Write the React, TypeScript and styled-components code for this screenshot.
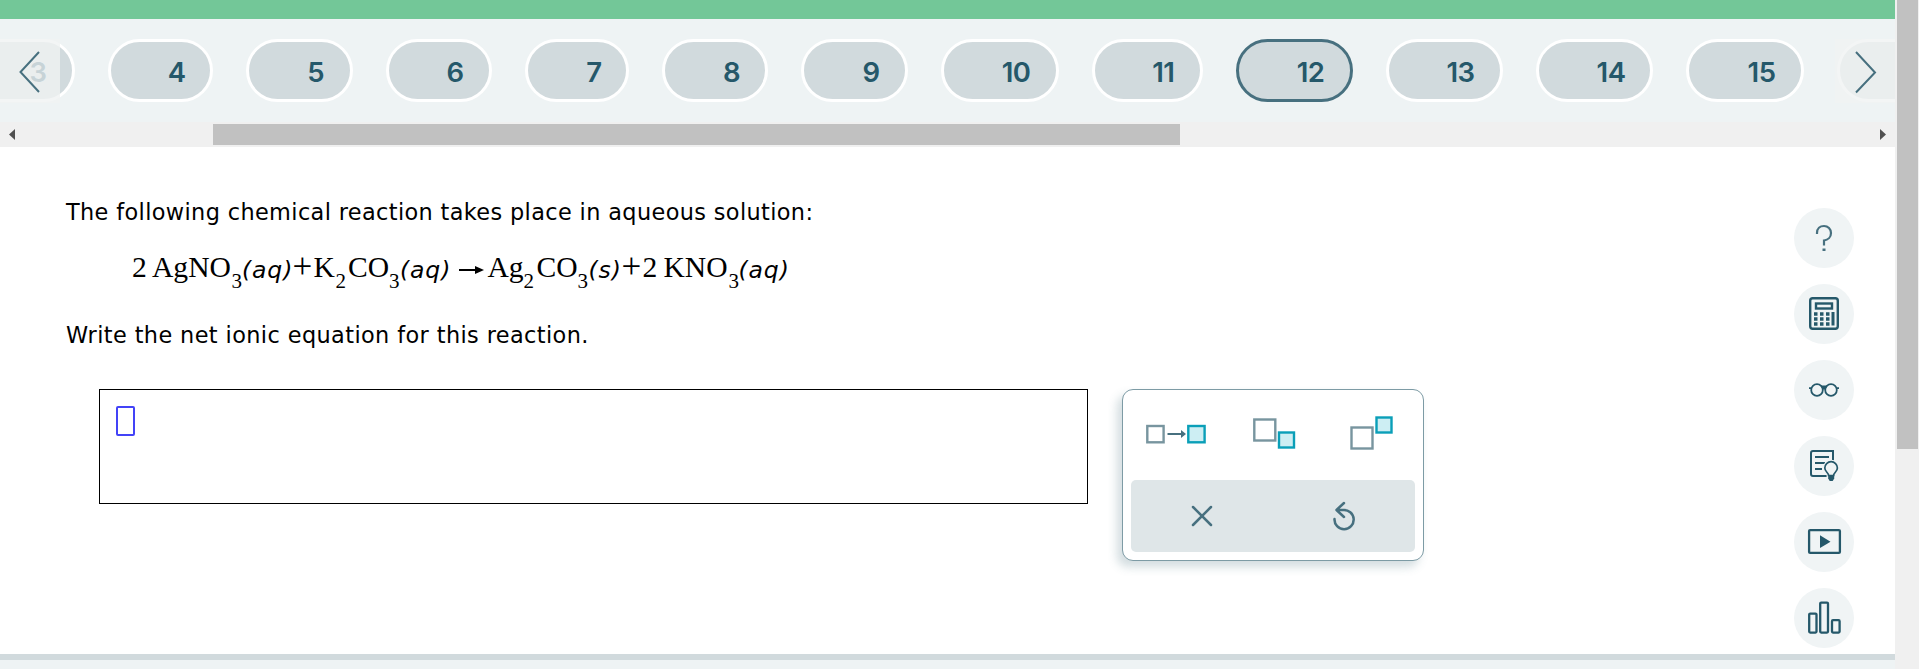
import React from 'react';
import styled, { createGlobalStyle } from 'styled-components';

const GlobalStyle = createGlobalStyle`
  * { box-sizing: border-box; }
  body { margin: 0; background: #fff; overflow: hidden; }
`;

const Screen = styled.div`
  display: flex;
  width: 1919px;
  height: 669px;
  overflow: hidden;
  background: #fff;
`;

const Page = styled.div`
  width: 1895px;
  display: flex;
  flex-direction: column;
`;

const TopBar = styled.div`
  height: 19px;
  flex: none;
  background: #73c798;
`;

const QuestionNav = styled.nav`
  position: relative;
  height: 103px;
  flex: none;
  display: flex;
  align-items: flex-start;
  padding-top: 20px;
  overflow: hidden;
  background: #eef3f4;
`;

const Pill = styled.div<{ $width: number; $inset?: number; $active?: boolean }>`
  flex: none;
  width: ${(p) => p.$width}px;
  height: 63px;
  padding: 4px ${(p) => p.$inset ?? 25.5}px 0 0;
  border: 3px solid ${(p) => (p.$active ? '#47707f' : '#fff')};
  border-radius: 32px;
  background: #d1dadd;
  display: flex;
  align-items: center;
  justify-content: flex-end;
  font: 600 27.5px/1 Inter, sans-serif;
  letter-spacing: -0.5px;
  color: #25586a;
`;

const PillStrip = styled.div`
  display: flex;
  gap: 33px;
  margin-left: -31px;
`;

const NavArrow = styled.button<{ $side: 'left' | 'right' }>`
  position: absolute;
  top: 20px;
  ${(p) => p.$side}: 0;
  width: 60px;
  height: 64px;
  padding: 0;
  border: 0;
  background: rgba(240, 243, 243, 0.8);
`;

const HScroll = styled.div`
  height: 25px;
  flex: none;
  display: flex;
  align-items: center;
  justify-content: space-between;
  background: #f0f0f0;
`;

const HTrack = styled.div`
  flex: 1;
  padding-left: 189px;
`;

const HThumb = styled.div`
  width: 967px;
  height: 21px;
  background: #c1c1c1;
`;

const Body = styled.main`
  height: 507px;
  flex: none;
  display: flex;
  justify-content: space-between;
`;

const Question = styled.section`
  padding: 49px 0 0 66px;
  color: #000;
`;

const Paragraph = styled.p<{ $spacing: number }>`
  margin: 0;
  height: 32px;
  font: 22.4px/32px 'DejaVu Sans', Verdana, sans-serif;
  letter-spacing: ${(p) => p.$spacing}px;
  white-space: nowrap;
`;

const Equation = styled.div`
  display: flex;
  align-items: baseline;
  height: 60px;
  margin: 9px 0 22px 66px;
  font: 29.6px/60px 'Liberation Serif', serif;
  white-space: pre;
`;

const Term = styled.span<{ $width: number }>`
  width: ${(p) => p.$width}px;
  flex: none;
`;

const Plus = styled(Term)`
  position: relative;
  top: 1px;
  left: -1px;
  font-size: 35px;
  line-height: 1;
`;

const Sub = styled(Term)`
  position: relative;
  top: 11px;
  font-size: 21px;
  line-height: 1;
`;

const State = styled(Term)`
  position: relative;
  top: 1px;
  font: italic 23.5px/1 'DejaVu Sans', Verdana, sans-serif;
  letter-spacing: 0.9px;
`;

const Workspace = styled.div`
  display: flex;
  align-items: flex-start;
  gap: 34px;
  margin: 38px 0 0 33px;
`;

const Answer = styled.div`
  width: 989px;
  height: 115px;
  padding: 16px;
  border: 1px solid #000;
`;

const Slot = styled.div`
  width: 19px;
  height: 30px;
  border: 2px solid #4343f7;
  border-radius: 2px;
`;

const Palette = styled.div`
  width: 302px;
  height: 172px;
  padding: 8px;
  display: flex;
  flex-direction: column;
  justify-content: space-between;
  border: 1px solid #7d9ba5;
  border-radius: 11px;
  background: #fff;
  box-shadow: -5px 6px 10px rgba(71, 112, 127, 0.24);
`;

const PaletteActions = styled.div`
  height: 72px;
  border-radius: 5px;
  background: #dfe6e8;
`;

const SideTools = styled.aside`
  display: flex;
  flex-direction: column;
  gap: 16px;
  padding: 61px 41px 0 0;
`;

const ToolButton = styled.button`
  width: 60px;
  height: 60px;
  padding: 0;
  border: 0;
  border-radius: 50%;
  background: #f0f4f5;
  display: block;
`;

const Footer = styled.div`
  flex: 1;
  border-top: 6px solid #d1dadd;
  background: #eef3f4;
`;

const VScroll = styled.div`
  width: 24px;
  padding: 0 1px 0 2px;
  background: #f0f0f0;
`;

const VThumb = styled.div`
  height: 449px;
  background: #c1c1c1;
`;

const Svg = styled.svg`
  display: block;
  flex: none;
`;

const pills = [
  { label: '3', w: 106 },
  { label: '4', w: 105, inset: 24.5 },
  { label: '5', w: 107, inset: 26 },
  { label: '6', w: 106 },
  { label: '7', w: 104, inset: 24.5 },
  { label: '8', w: 106, inset: 25 },
  { label: '9', w: 107 },
  { label: '10', w: 118 },
  { label: '11', w: 111 },
  { label: '12', w: 117 },
  { label: '13', w: 117 },
  { label: '14', w: 117, inset: 24.5 },
  { label: '15', w: 118 },
  { label: '', w: 118 },
];

function HelpIcon() {
  return (
    <g fill="none" stroke="#47707f" strokeWidth="2.200">
      <path d="M23 26v-1c0-4.500 3-7 7-7s7 3 7 7-3 7-7 7.500v5" />
      <path d="M30 40.500v2.500" strokeWidth="3" />
    </g>
  );
}

function CalculatorIcon() {
  return (
    <g fill="none" stroke="#25586a" strokeWidth="2.400">
      <rect x="16.200" y="14.200" width="27.600" height="30.600" rx="2.500" />
      <rect x="22" y="19.500" width="16" height="5" />
      {[30, 35, 40].map((y) => (
        <path key={y} d={`M20 ${y}h3.500M26 ${y}h3.500M32 ${y}h3.500`} strokeWidth="3.300" />
      ))}
      <path d="M39 28v13.500" strokeWidth="3" />
    </g>
  );
}

function GlassesIcon() {
  return (
    <g fill="none" stroke="#25586a" strokeWidth="1.800">
      <circle cx="23" cy="30" r="5.800" />
      <circle cx="37" cy="30" r="5.800" />
      <path d="M15 28.200h2.500M45 28.200h-2.500M27 26.500h6M28.500 29q1.500-1.500 3 0" />
    </g>
  );
}

function NotesIcon() {
  const bulb = 'M34.600 39.500c0-3-3.800-3.700-3.800-7.500a6.300 6.300 0 0 1 12.600 0c0 3.800-3.800 4.500-3.800 7.500z';
  return (
    <g fill="none" stroke="#25586a" strokeWidth="2">
      <path d="M34 40H19q-2 0-2-2V17q0-2 2-2h20v12M21 21h14M21 27h10M21 33h7" />
      <path d={bulb} stroke="#f0f4f5" strokeWidth="4" />
      <path d={bulb} fill="#f0f4f5" strokeWidth="1.700" />
      <path d="M34.200 39h6v3.500l-1.500 2.500h-3l-1.500-2.500z" fill="#25586a" stroke="none" />
    </g>
  );
}

function VideoIcon() {
  return (
    <g>
      <rect x="15.100" y="18.100" width="30.800" height="22.800" rx="1" fill="none" stroke="#25586a" strokeWidth="2.300" />
      <path d="M26 23.300v12.700l10.500-6.350z" fill="#25586a" />
    </g>
  );
}

function ChartIcon() {
  return (
    <g fill="none" stroke="#25586a" strokeWidth="2.300">
      <rect x="15.200" y="25.600" width="7.300" height="19" rx="1" />
      <rect x="26.200" y="14.600" width="7.800" height="30" rx="1" />
      <rect x="38" y="32.200" width="7.600" height="12.400" rx="1" />
    </g>
  );
}

const tools = [HelpIcon, CalculatorIcon, GlassesIcon, NotesIcon, VideoIcon, ChartIcon];

export default function App() {
  return (
    <Screen>
      <GlobalStyle />
      <Page>
        <TopBar />
        <QuestionNav>
          <PillStrip>
            {pills.map((p) => (
              <Pill key={p.label} $width={p.w} $inset={p.inset} $active={p.label === '12'}>
                {p.label}
              </Pill>
            ))}
          </PillStrip>
          <NavArrow $side="left" aria-label="Previous">
            <Svg width="60" height="64" fill="none" stroke="#47707f" strokeWidth="2">
              <path d="M39 13L20.500 33L39 53" />
            </Svg>
          </NavArrow>
          <NavArrow $side="right" aria-label="Next">
            <Svg width="60" height="64" fill="none" stroke="#47707f" strokeWidth="2">
              <path d="M21 13L40 33.500L21 53.500" />
            </Svg>
          </NavArrow>
        </QuestionNav>
        <HScroll>
          <Svg width="24" height="21" fill="#505050">
            <path d="M15 5v11l-6-5.500z" />
          </Svg>
          <HTrack>
            <HThumb />
          </HTrack>
          <Svg width="24" height="21" fill="#505050">
            <path d="M9 5v11l6-5.500z" />
          </Svg>
        </HScroll>
        <Body>
          <Question>
            <Paragraph $spacing={0.37}>The following chemical reaction takes place in aqueous solution:</Paragraph>
            <Equation>
              <Term $width={20}>2</Term>
              <Term $width={79.5}>AgNO</Term>
              <Sub $width={10.5}>3</Sub>
              <State $width={51.5}>(aq)</State>
              <Plus $width={20}>+</Plus>
              <Term $width={22}>K</Term>
              <Sub $width={12.5}>2</Sub>
              <Term $width={41}>CO</Term>
              <Sub $width={11}>3</Sub>
              <State $width={57.5}>(aq)</State>
              <Svg width="30" height="14">
                <path d="M1 7h18" stroke="#000" strokeWidth="2" />
                <path d="M17 3l9 4l-9 4z" />
              </Svg>
              <Term $width={36}>Ag</Term>
              <Sub $width={13}>2</Sub>
              <Term $width={41}>CO</Term>
              <Sub $width={11}>3</Sub>
              <State $width={34}>(s)</State>
              <Plus $width={20}>+</Plus>
              <Term $width={21}>2</Term>
              <Term $width={65}>KNO</Term>
              <Sub $width={10}>3</Sub>
              <State $width={50}>(aq)</State>
            </Equation>
            <Paragraph $spacing={0.4}>Write the net ionic equation for this reaction.</Paragraph>
            <Workspace>
              <Answer>
                <Slot />
              </Answer>
              <Palette>
                <Svg width="284" height="80">
                  <g fill="none" stroke="#78959f" strokeWidth="2.400">
                    <rect x="16.300" y="28" width="16.300" height="16.300" />
                    <rect x="123.300" y="21.500" width="21" height="21" />
                    <rect x="220.500" y="29.500" width="21" height="21" />
                  </g>
                  <g fill="#cdeef3" stroke="#0a9fb8" strokeWidth="2.400">
                    <rect x="57.300" y="28" width="16.300" height="16.300" />
                    <rect x="148" y="34.500" width="15" height="15" />
                    <rect x="245.500" y="19.500" width="15" height="15" />
                  </g>
                  <path d="M36.500 36h14" stroke="#47707f" strokeWidth="2" />
                  <path d="M50 32l5 4l-5 4z" fill="#47707f" />
                </Svg>
                <PaletteActions>
                  <Svg width="284" height="72" fill="none" stroke="#47707f" strokeWidth="2.500" strokeLinecap="round">
                    <path d="M62 27l18 18M80 27l-18 18" />
                    <path d="M213 23l-7.500 7l7.500 7M206 30h6a9.600 9.600 0 1 1-8.500 9" strokeLinejoin="round" />
                  </Svg>
                </PaletteActions>
              </Palette>
            </Workspace>
          </Question>
          <SideTools>
            {tools.map((Icon, i) => (
              <ToolButton key={i}>
                <Svg width="60" height="60">
                  <Icon />
                </Svg>
              </ToolButton>
            ))}
          </SideTools>
        </Body>
        <Footer />
      </Page>
      <VScroll>
        <VThumb />
      </VScroll>
    </Screen>
  );
}
